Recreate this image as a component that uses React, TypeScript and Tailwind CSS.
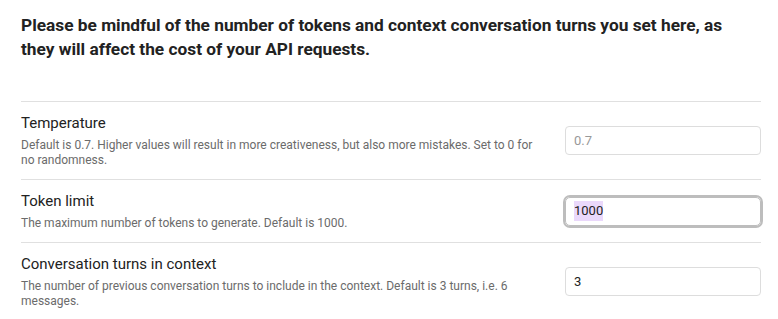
import React from "react";

interface SettingRowProps {
  label: string;
  description: string;
  children: React.ReactNode;
}

function SettingRow({ label, description, children }: SettingRowProps) {
  return (
    <div className="flex items-center gap-6 border-t border-[#e0e0e0] pt-[11px] pb-[11px]">
      <div className="flex-1">
        <div className="text-[15px] leading-[20px] text-[#222]">{label}</div>
        <p className="mt-[5px] text-[12px] leading-[15px] text-[#6b6b6b]">{description}</p>
      </div>
      <div className="w-[196px] shrink-0">{children}</div>
    </div>
  );
}

export default function App() {
  return (
    <div className="min-h-[319px] bg-white pl-[21px] pr-[17px] pt-[13px] font-['Roboto',sans-serif]">
      <h2 className="max-w-[725px] text-[17.3px] font-bold leading-[24px] text-[#222]">
        Please be mindful of the number of tokens and context conversation turns you set here, as they
        will affect the cost of your API requests.
      </h2>

      <div className="mt-[40px]">
        <SettingRow
          label="Temperature"
          description="Default is 0.7. Higher values will result in more creativeness, but also more mistakes. Set to 0 for no randomness."
        >
          <input
            type="text"
            placeholder="0.7"
            className="h-[29px] w-full rounded-[4px] border border-[#ddd] px-2 text-[13px] text-[#222] placeholder:text-[#999] focus:outline-none"
          />
        </SettingRow>

        <SettingRow label="Token limit" description="The maximum number of tokens to generate. Default is 1000.">
          {/* focused field with selected value */}
          <div className="flex h-[29px] w-full items-center rounded-[5px] border border-[#bdbdbd] px-2 text-[13px] text-[#222] ring-2 ring-[#bdbdbd]">
            <span className="bg-[#ead8fb]">1000</span>
          </div>
        </SettingRow>

        <SettingRow
          label="Conversation turns in context"
          description="The number of previous conversation turns to include in the context. Default is 3 turns, i.e. 6 messages."
        >
          <input
            type="text"
            defaultValue="3"
            className="h-[29px] w-full rounded-[4px] border border-[#ddd] px-2 text-[13px] text-[#222] focus:outline-none"
          />
        </SettingRow>
      </div>
    </div>
  );
}
